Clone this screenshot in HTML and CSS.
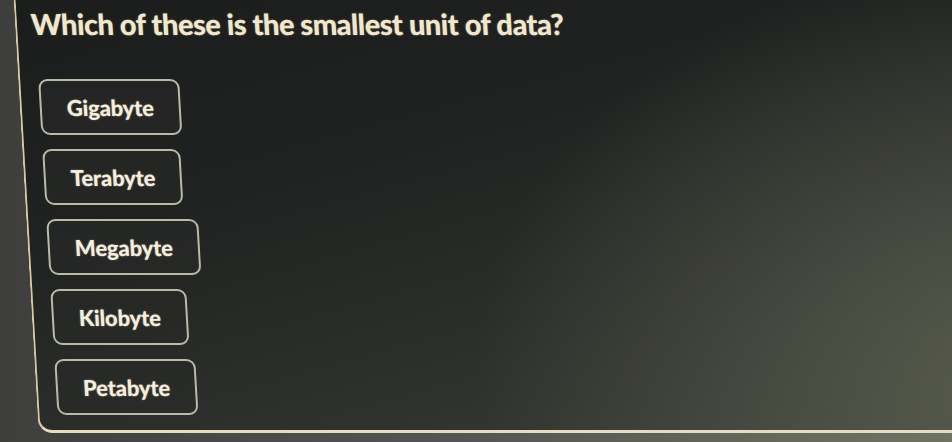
FILE: index.html
```html
<!DOCTYPE html>
<html lang="en">
<head>
<meta charset="utf-8">
<title>Quiz</title>
<link rel="stylesheet" href="styles.css">
</head>
<body>
<div class="stage">
  <div class="panel">
    <h1 class="question">Which of these is the smallest unit of data?</h1>
    <div class="options">
      <button class="option">Gigabyte</button>
      <button class="option">Terabyte</button>
      <button class="option">Megabyte</button>
      <button class="option">Kilobyte</button>
      <button class="option">Petabyte</button>
    </div>
  </div>
</div>
</body>
</html>
```
FILE: styles.css
```css
html, body {
  margin: 0;
  padding: 0;
  width: 952px;
  height: 442px;
  overflow: hidden;
}
body {
  background: linear-gradient(90deg, #3e3e3d 0%, #505150 40%, #6f7262 100%);
  font-family: Lato, "Open Sans", sans-serif;
}
.stage {
  width: 952px;
  height: 442px;
  overflow: hidden;
}
.panel {
  box-sizing: border-box;
  margin-left: 13px;
  margin-top: -10px;
  width: 1000px;
  height: 443px;
  border-left: 2px solid #d9c7a3;
  border-bottom: 3px solid #e6dcbf;
  border-bottom-left-radius: 14px;
  background:
    radial-gradient(ellipse 560px 420px at 100% 90%, rgba(92, 96, 80, 0.9), rgba(92, 96, 80, 0) 100%),
    linear-gradient(165deg, #1b1c1c 0%, #202221 35%, #2c2e2b 65%, #3a3d36 100%);
  transform: skewX(3.3deg);
  transform-origin: 0 0;
  padding: 16px 0 0 14px;
}
.question {
  margin: 0;
  font-size: 29px;
  font-weight: 900;
  letter-spacing: -0.5px;
  color: #f1e8cc;
  line-height: 36px;
  text-shadow: 0 0 2px rgba(255, 240, 200, 0.35);
}
.options {
  display: flex;
  flex-direction: column;
  align-items: flex-start;
  gap: 14px;
  margin-top: 37px;
  margin-left: 4px;
}
.option {
  box-sizing: border-box;
  height: 56px;
  padding: 0 25px;
  border: 2px solid #b9bba6;
  border-radius: 9px;
  background: rgba(40, 42, 40, 0.6);
  color: #f4eedc;
  font-family: Lato, "Open Sans", sans-serif;
  font-size: 22px;
  font-weight: 900;
  letter-spacing: -0.2px;
  text-shadow: 0 0 2px rgba(255, 240, 210, 0.4);
}
```
